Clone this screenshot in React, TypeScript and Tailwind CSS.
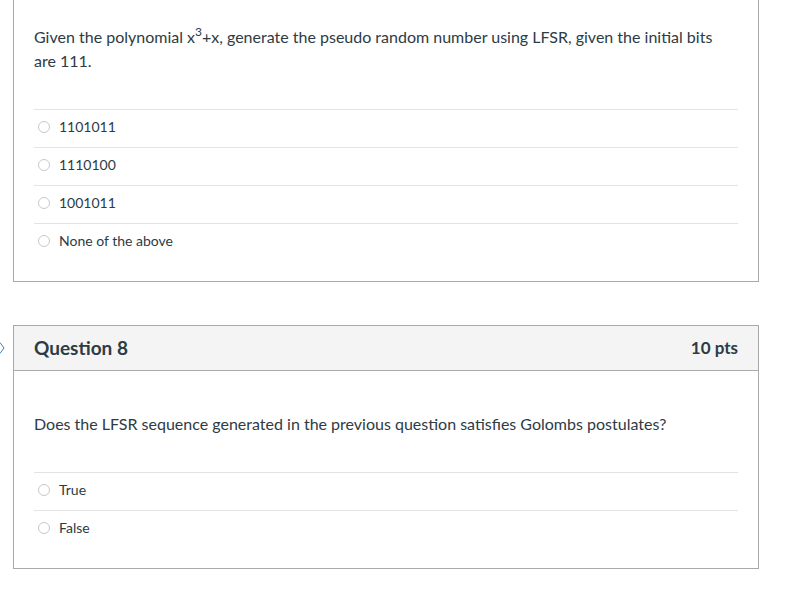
const font = { fontFamily: "Lato, 'Noto Sans', sans-serif" };

function Answer({ label }: { label: string }) {
  return (
    <div className="flex h-[38px] items-center border-t border-[#e3e3e3] pb-[3px] pl-[4px]">
      <span className="h-[12px] w-[12px] rounded-full border border-[#c9c9c9] bg-white" />
      <span className="ml-[9px] text-[14px] leading-5 text-[#2d3b45]">{label}</span>
    </div>
  );
}

export default function App() {
  return (
    <div className="min-h-[595px] w-[785px] bg-white" style={font}>
      <div className="pl-[13px] pt-0">
        {/* previous question, header scrolled out of view */}
        <div className="w-[746px] border border-t-0 border-[#a9a9a9] px-[20px] pt-[25px] pb-[20px]">
          <p className="max-w-[690px] text-[16px] leading-6 text-[#2d3b45]">
            Given the polynomial x<sup className="top-[-0.6em] text-[12px] leading-none">3</sup>+x, generate the pseudo random number using LFSR, given the initial bits are 111.
          </p>
          <div className="mt-[36px]">
            <Answer label="1101011" />
            <Answer label="1110100" />
            <Answer label="1001011" />
            <Answer label="None of the above" />
          </div>
        </div>

        <div className="relative mt-[43px] w-[746px] border border-[#a9a9a9]">
          <svg className="absolute top-[16px] left-[-17px]" width="8" height="12" viewBox="0 0 8 12" fill="none">
            <path d="M0.5 0.5 H3 L7 6 L3 11.5 H0.5" stroke="#3f7fb8" strokeWidth="1" />
          </svg>
          <div className="flex h-[45px] items-center justify-between border-b border-[#a9a9a9] bg-[#f4f4f4] px-[20px]">
            <span className="text-[19px] font-bold text-[#2d3b45]">Question 8</span>
            <span className="text-[17px] font-bold text-[#2d3b45]">10 pts</span>
          </div>
          <div className="px-[20px] pt-[41px] pb-[20px]">
            <p className="text-[16px] leading-6 text-[#2d3b45]">
              Does the LFSR sequence generated in the previous question satisfies Golombs postulates?
            </p>
            <div className="mt-[36px]">
              <Answer label="True" />
              <Answer label="False" />
            </div>
          </div>
        </div>
      </div>
    </div>
  );
}
